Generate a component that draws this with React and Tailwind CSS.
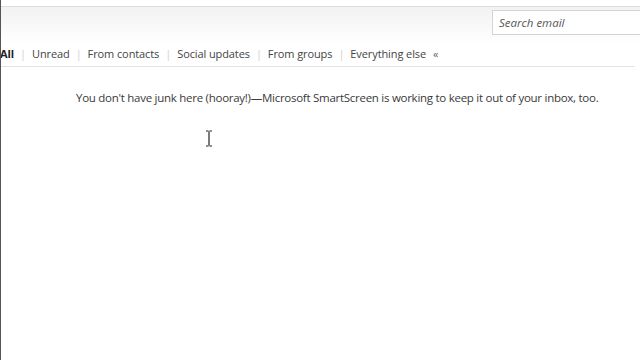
export default function App() {
  const tabs = ['Unread', 'From contacts', 'Social updates', 'From groups', 'Everything else'];

  return (
    <div className="w-[640px] h-[360px] bg-white relative overflow-hidden border-l border-[#555]" style={{ fontFamily: '"Open Sans", "Noto Sans", sans-serif' }}>
      {/* Header band */}
      <div className="h-[38px] mt-[6px] border-t border-[#dedede] bg-gradient-to-b from-[#f2f2f2] to-white flex items-start justify-end">
        <div className="mt-[3px] w-[150px] h-[25px] border border-[#d4d4d4] bg-white flex items-center pl-[6px] -mr-[2px] shrink-0">
          <span className="text-[11.5px] italic text-[#555]">Search email</span>
        </div>
      </div>

      {/* Filter tabs */}
      <div className="h-[22px] mt-[1px] flex items-center text-[11px] text-[#444] tracking-[-0.1px] border-b border-[#e3e3e3] mr-[5px] pb-[2px]">
        <span className="font-bold text-[#222] -ml-[1px]">All</span>
        {tabs.map((t) => (
          <div key={t} className="flex items-center">
            <span className="text-[#d0d0d0] px-[6px]">|</span>
            <span>{t}</span>
          </div>
        ))}
        <span className="ml-[7px] text-[#666]">«</span>
      </div>

      {/* Empty message */}
      <div className="mt-[22px] pl-[75px] text-[11.5px] text-[#3a3a3a] tracking-[-0.27px]">
        You don't have junk here (hooray!)—Microsoft SmartScreen is working to keep it out of your inbox, too.
      </div>

      {/* text cursor */}
      <svg className="absolute left-[204px] top-[130px]" width="8" height="17" viewBox="0 0 8 17">
        <path d="M1 1h2.5M4.5 1H7M4 1.5v14M1 16h2.5M4.5 16H7" stroke="#222" strokeWidth="1.2" fill="none" />
      </svg>
    </div>
  );
}
